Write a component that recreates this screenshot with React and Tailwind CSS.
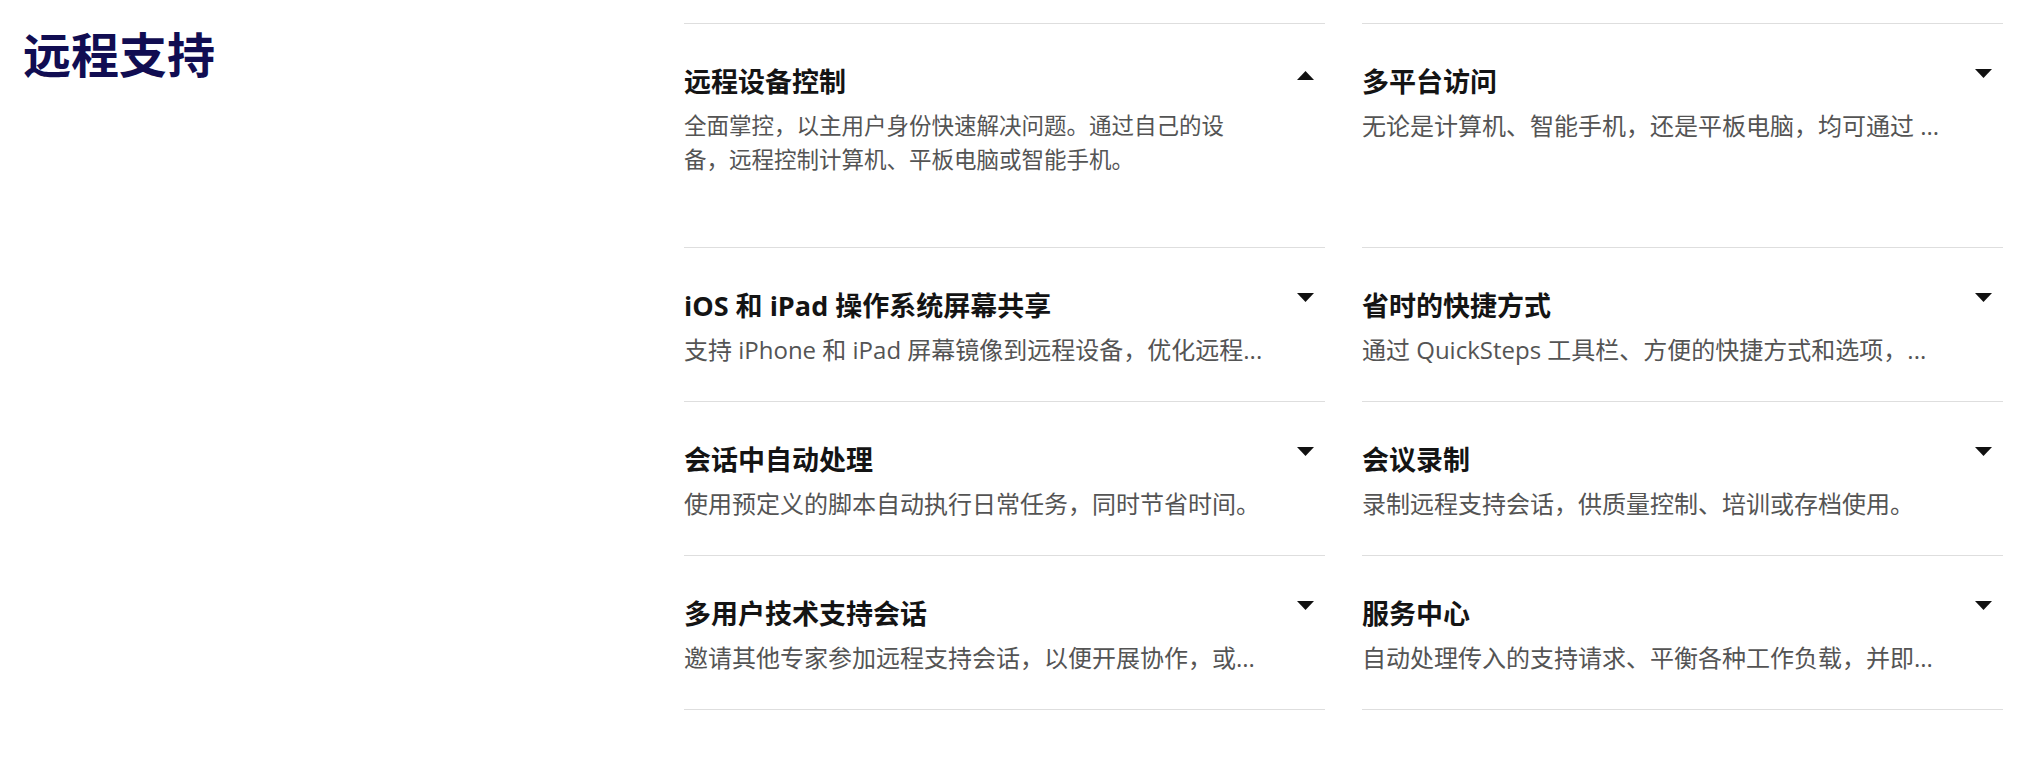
import React from "react";

const FONT = { fontFamily: '"Open Sans", "Noto Sans CJK SC", sans-serif' };

const items = [
  {
    title: "远程设备控制",
    desc: "全面掌控，以主用户身份快速解决问题。通过自己的设备，远程控制计算机、平板电脑或智能手机。",
    open: true,
  },
  { title: "多平台访问", desc: "无论是计算机、智能手机，还是平板电脑，均可通过 ..." },
  { title: "iOS 和 iPad 操作系统屏幕共享", desc: "支持 iPhone 和 iPad 屏幕镜像到远程设备，优化远程..." },
  { title: "省时的快捷方式", desc: "通过 QuickSteps 工具栏、方便的快捷方式和选项，..." },
  { title: "会话中自动处理", desc: "使用预定义的脚本自动执行日常任务，同时节省时间。" },
  { title: "会议录制", desc: "录制远程支持会话，供质量控制、培训或存档使用。" },
  { title: "多用户技术支持会话", desc: "邀请其他专家参加远程支持会话，以便开展协作，或..." },
  { title: "服务中心", desc: "自动处理传入的支持请求、平衡各种工作负载，并即..." },
];

function Caret({ up }) {
  return up ? (
    <svg width="17" height="9" viewBox="0 0 17 9" className="shrink-0 mt-[7px]">
      <polygon points="0,9 17,9 8.5,0" fill="#111" />
    </svg>
  ) : (
    <svg width="17" height="9" viewBox="0 0 17 9" className="shrink-0 mt-[5px]">
      <polygon points="0,0 17,0 8.5,9" fill="#111" />
    </svg>
  );
}

function Item({ item, last }) {
  return (
    <div className={`border-t border-[#dedede] ${last ? "border-b" : ""} pt-[40px] ${item.open ? "pb-[70px]" : "pb-[34px]"} pr-[11px]`}>
      <div className="flex items-start justify-between">
        <div className="text-[27px] leading-[36px] font-bold text-[#141414]">{item.title}</div>
        <Caret up={item.open} />
      </div>
      {item.open ? (
        <div className="mt-[9px] text-[22.5px] leading-[34px] text-[#545454] max-w-[552px]">{item.desc}</div>
      ) : (
        <div className="mt-[9px] text-[24px] leading-[34px] text-[#545454] whitespace-nowrap">{item.desc}</div>
      )}
    </div>
  );
}

export default function App() {
  return (
    <div className="w-[2023px] h-[760px] bg-white flex pt-[23px] pl-[23px] pr-[20px]" style={FONT}>
      <div className="w-[661px] shrink-0">
        <h1 className="mt-[3px] text-[48px] leading-[58px] font-bold text-[#110d52]">远程支持</h1>
      </div>
      <div className="flex-1 grid grid-cols-2 gap-x-[37px] content-start">
        {items.map((it, i) => (
          <Item key={i} item={it} last={i >= items.length - 2} />
        ))}
      </div>
    </div>
  );
}
